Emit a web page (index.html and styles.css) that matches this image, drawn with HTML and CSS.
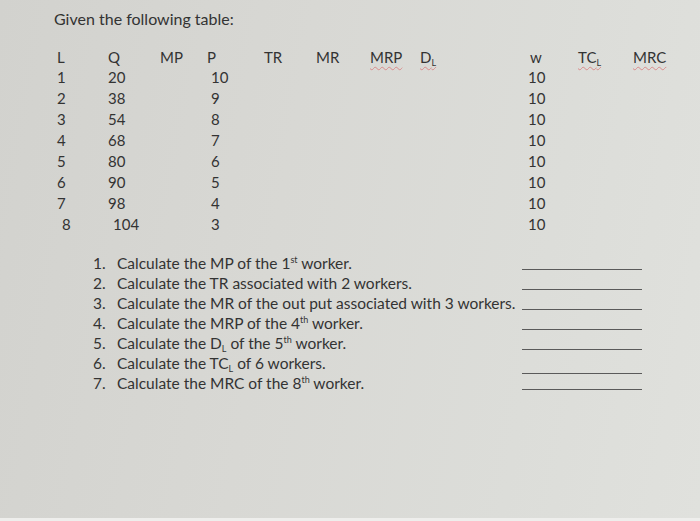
FILE: index.html
```html
<!DOCTYPE html>
<html>
<head>
<meta charset="utf-8">
<link rel="stylesheet" href="styles.css">
</head>
<body>
<div class="page">
  <h1 class="title">Given the following table:</h1>
  <div class="table">
    <div class="row head">
      <span>L</span><span>Q</span><span>MP</span><span>P</span><span>TR</span><span>MR</span>
      <span><span class="sq">MRP</span></span>
      <span><span class="sq">D<sub>L</sub></span></span>
      <span class="wcol">w</span>
      <span><span class="sq">TC<sub>L</sub></span></span>
      <span><span class="sq">MRC</span></span>
    </div>
    <div class="row"><span>1</span><span>20</span><span></span><span class="pv">10</span><span></span><span></span><span></span><span></span><span>10</span><span></span><span></span></div>
    <div class="row"><span>2</span><span>38</span><span></span><span class="pv">9</span><span></span><span></span><span></span><span></span><span>10</span><span></span><span></span></div>
    <div class="row"><span>3</span><span>54</span><span></span><span class="pv">8</span><span></span><span></span><span></span><span></span><span>10</span><span></span><span></span></div>
    <div class="row"><span>4</span><span>68</span><span></span><span class="pv">7</span><span></span><span></span><span></span><span></span><span>10</span><span></span><span></span></div>
    <div class="row"><span>5</span><span>80</span><span></span><span class="pv">6</span><span></span><span></span><span></span><span></span><span>10</span><span></span><span></span></div>
    <div class="row"><span>6</span><span>90</span><span></span><span class="pv">5</span><span></span><span></span><span></span><span></span><span>10</span><span></span><span></span></div>
    <div class="row"><span>7</span><span>98</span><span></span><span class="pv">4</span><span></span><span></span><span></span><span></span><span>10</span><span></span><span></span></div>
    <div class="row"><span class="shift">8</span><span class="shift">104</span><span></span><span class="pv">3</span><span></span><span></span><span></span><span></span><span>10</span><span></span><span></span></div>
  </div>
  <ol class="questions">
    <li><span class="num">1.</span><span class="q">Calculate the MP of the 1<sup>st</sup> worker.</span><span class="blank"></span></li>
    <li><span class="num">2.</span><span class="q">Calculate the TR associated with 2 workers.</span><span class="blank"></span></li>
    <li><span class="num">3.</span><span class="q">Calculate the MR of the out put associated with 3 workers.</span><span class="blank"></span></li>
    <li><span class="num">4.</span><span class="q">Calculate the MRP of the 4<sup>th</sup> worker.</span><span class="blank"></span></li>
    <li><span class="num">5.</span><span class="q">Calculate the D<sub>L</sub> of the 5<sup>th</sup> worker.</span><span class="blank"></span></li>
    <li><span class="num">6.</span><span class="q">Calculate the TC<sub>L</sub> of 6 workers.</span><span class="blank low"></span></li>
    <li><span class="num">7.</span><span class="q">Calculate the MRC of the 8<sup>th</sup> worker.</span><span class="blank"></span></li>
  </ol>
</div>
</body>
</html>
```

FILE: styles.css
```css
html, body {
  margin: 0;
  padding: 0;
}
body {
  width: 700px;
  height: 521px;
  overflow: hidden;
  background: #eeeeec;
  font-family: Lato, "Open Sans", sans-serif;
  color: #333333;
}
.page {
  height: 518px;
  box-sizing: border-box;
  padding: 8px 0 0 54px;
  background: linear-gradient(100deg, #d2d2ce 0%, #d8d8d4 40%, #dcddd9 75%, #e0e1dd 100%);
}
.title {
  margin: 0;
  font-size: 16px;
  font-weight: 400;
  line-height: 22px;
}
.table {
  margin-top: 17px;
  margin-left: 3px;
  font-size: 15px;
}
.row {
  display: grid;
  grid-template-columns: 51px 52px 47px 57px 52px 54px 50px 108px 50px 55px 40px;
  height: 21px;
  line-height: 21px;
}
.row.head {
  height: 20px;
}
.wcol {
  padding-left: 2px;
}
.pv {
  padding-left: 4px;
}
.shift {
  padding-left: 5px;
}
.sq {
  text-decoration: underline wavy #d98a8a;
  text-decoration-thickness: 1px;
  text-underline-offset: 3px;
}
sub {
  font-size: 9px;
  vertical-align: -3px;
  line-height: 0;
}
sup {
  font-size: 9px;
  vertical-align: 6px;
  line-height: 0;
}
.questions {
  list-style: none;
  margin: 18px 0 0 39px;
  padding: 0;
  font-size: 15.5px;
}
.questions li {
  display: grid;
  grid-template-columns: 24px 405px 120px;
  height: 20px;
  line-height: 20px;
}
.q {
  white-space: nowrap;
}
.blank {
  align-self: end;
  height: 1px;
  margin-bottom: 3px;
  background: #5a5a5a;
}
.blank.low {
  margin-bottom: -1px;
}
```
